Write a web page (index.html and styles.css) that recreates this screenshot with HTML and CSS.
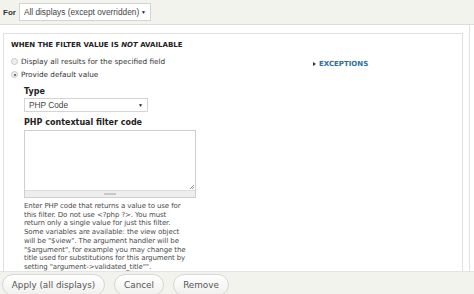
FILE: index.html
```html
<!DOCTYPE html>
<html>
<head>
<meta charset="utf-8">
<link rel="stylesheet" href="styles.css">
</head>
<body>
<div class="page">
  <div class="topbar">
    <span class="for-label">For</span>
    <div class="select select-wide"><span>All displays (except overridden)</span><span class="arrow">▼</span></div>
  </div>
  <div class="main">
    <div class="fieldset">
      <div class="col-left">
        <div class="legend">WHEN THE FILTER VALUE IS <em>NOT</em> AVAILABLE</div>
        <div class="radio-row"><span class="radio"></span><span>Display all results for the specified field</span></div>
        <div class="radio-row"><span class="radio checked"></span><span>Provide default value</span></div>
        <div class="sub">
          <div class="field-label">Type</div>
          <div class="select select-type"><span>PHP Code</span><span class="arrow">▼</span></div>
          <div class="field-label label-code">PHP contextual filter code</div>
          <div class="textarea">
            <div class="ta-body"><span class="resize"></span></div>
            <div class="grippie"><span class="grip"></span></div>
          </div>
          <div class="desc">Enter PHP code that returns a value to use for<br>this filter. Do not use &lt;?php ?&gt;. You must<br>return only a single value for just this filter.<br>Some variables are available: the view object<br>will be "$view". The argument handler will be<br>"$argument", for example you may change the<br>title used for substitutions for this argument by<br>setting "argument-&gt;validated_title"".</div>
        </div>
      </div>
      <div class="col-right">
        <a class="exceptions"><span class="tri"></span>EXCEPTIONS</a>
      </div>
    </div>
  </div>
  <div class="bottombar">
    <button class="btn btn-apply">Apply (all displays)</button>
    <button class="btn btn-cancel">Cancel</button>
    <button class="btn btn-remove">Remove</button>
  </div>
</div>
</body>
</html>
```

FILE: styles.css
```css
html, body {
  margin: 0;
  padding: 0;
  background: #fff;
}
.page {
  width: 474px;
  height: 294px;
  overflow: hidden;
  font-family: "DejaVu Sans", Verdana, sans-serif;
  color: #333;
}
.topbar {
  background: #f3f3ee;
  border-bottom: 1px solid #dedcd6;
  display: flex;
  align-items: center;
  padding-left: 3px;
  box-sizing: border-box;
  height: 25px;
  gap: 3px;
}
.for-label {
  font-family: "Liberation Sans", Arial, sans-serif;
  font-weight: bold;
  font-size: 8px;
  color: #333;
}
.select {
  background: #fff;
  border: 1px solid #d4d4d4;
  box-sizing: border-box;
  display: flex;
  align-items: center;
  justify-content: space-between;
  font-family: "Liberation Sans", Arial, sans-serif;
  font-size: 8.3px;
  color: #444;
  padding: 0 4px 0 4px;
  white-space: nowrap;
}
.select .arrow {
  font-size: 5px;
  color: #222;
}
.select-wide {
  width: 132px;
  height: 18px;
}
.main {
  height: 246px;
  box-sizing: border-box;
  padding: 8px 6px 0 3px;
  border-right: 1px solid #e2e2e2;
  width: 470px;
}
.fieldset {
  border: 1px solid #e0e0e0;
  border-bottom: none;
  height: 238px;
  box-sizing: border-box;
  display: flex;
  padding: 5px 0 0 7px;
}
.col-left {
  width: 302px;
}
.col-right {
  padding-top: 21px;
}
.legend {
  font-weight: bold;
  font-size: 7px;
  color: #222;
  height: 12px;
  line-height: 12px;
  margin-bottom: 4px;
}
.legend em {
  font-style: italic;
}
.radio-row {
  display: flex;
  align-items: center;
  gap: 3px;
  font-size: 7.3px;
  color: #333;
  height: 13px;
}
.radio {
  width: 7px;
  height: 7px;
  border-radius: 50%;
  border: 1px solid #c8c8c8;
  background: #eee;
  box-sizing: border-box;
  position: relative;
}
.radio.checked::after {
  content: "";
  position: absolute;
  left: 1.5px;
  top: 1.5px;
  width: 2px;
  height: 2px;
  border-radius: 50%;
  background: #555;
}
.sub {
  padding-left: 13px;
  padding-top: 6px;
}
.field-label {
  font-weight: bold;
  font-size: 8px;
  color: #222;
  height: 10px;
  line-height: 10px;
}
.select-type {
  width: 124px;
  height: 14px;
  margin-top: 1px;
}
.label-code {
  margin-top: 6px;
}
.textarea {
  width: 172px;
  margin-top: 2px;
  border: 1px solid #cfcfcf;
  box-sizing: border-box;
}
.ta-body {
  height: 59px;
  position: relative;
  background: #fff;
}
.resize {
  position: absolute;
  right: 1px;
  bottom: 1px;
  width: 4px;
  height: 4px;
  background: linear-gradient(135deg, transparent 45%, #999 45%, #999 55%, transparent 55%, transparent 70%, #999 70%, #999 80%, transparent 80%);
}
.grippie {
  height: 6px;
  background: #eee;
  border-top: 1px solid #ddd;
  display: flex;
  justify-content: center;
  align-items: center;
}
.grip {
  width: 12px;
  height: 2px;
  border-top: 1px solid #c8c8c8;
  border-bottom: 1px solid #c8c8c8;
  box-sizing: border-box;
}
.desc {
  margin-top: 4px;
  white-space: nowrap;
  font-size: 7px;
  letter-spacing: -0.1px;
  line-height: 8.7px;
  color: #4a4a4a;
}
.exceptions {
  font-weight: bold;
  font-size: 7px;
  color: #2e6ca4;
  display: flex;
  align-items: center;
  gap: 3px;
}
.tri {
  width: 0;
  height: 0;
  border-left: 3px solid #333;
  border-top: 2px solid transparent;
  border-bottom: 2px solid transparent;
}
.bottombar {
  height: 23px;
  background: #f3f3ee;
  border-top: 1px solid #e4e4e0;
  box-sizing: border-box;
  display: flex;
  align-items: flex-start;
  gap: 9px;
  padding: 2px 0 0 2px;
}
.btn {
  font-family: "DejaVu Sans", Verdana, sans-serif;
  font-size: 8.8px;
  color: #555;
  height: 22px;
  border: 1px solid #d6d6d6;
  border-radius: 11px;
  background: linear-gradient(#fff, #f0f0ee);
  padding: 0 4px;
  margin: 0;
}
.btn-apply { width: 103px; }
.btn-cancel { width: 50px; }
.btn-remove { width: 56px; }
```
